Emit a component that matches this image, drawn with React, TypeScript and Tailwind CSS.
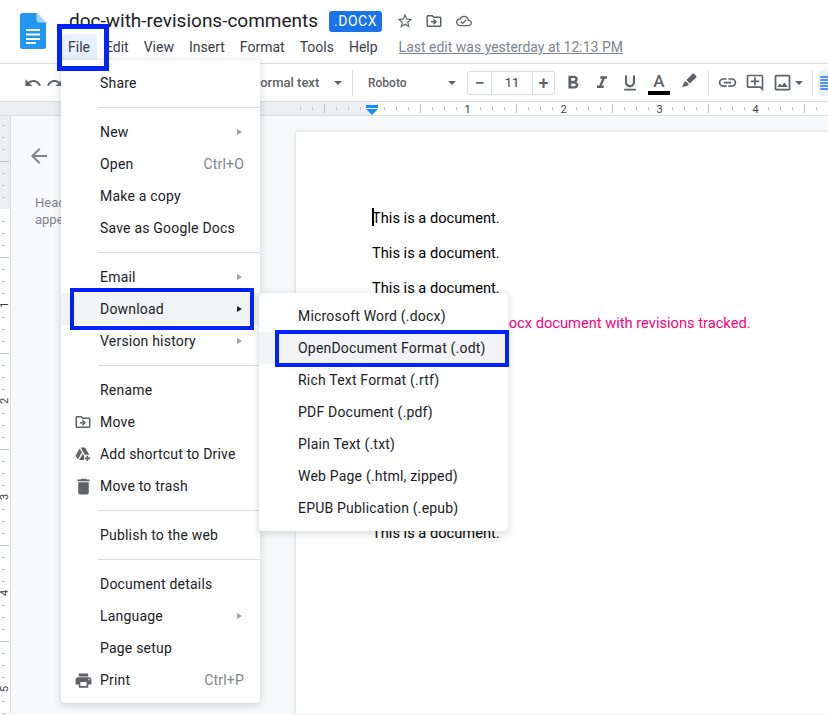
import React from 'react';
import {
  MdUndo,
  MdRedo,
  MdFormatBold,
  MdFormatItalic,
  MdFormatUnderlined,
  MdLink,
  MdOutlineAddComment,
  MdOutlineImage,
  MdStarBorder,
  MdOutlineDriveFileMove,
  MdOutlineCloudDone,
  MdDelete,
  MdPrint,
  MdArrowBack,
  MdFormatAlignLeft,
} from 'react-icons/md';

const font = "font-['Roboto','Liberation_Sans',sans-serif]";

function Caret() {
  return <div className="w-0 h-0 shrink-0 border-x-[4px] border-x-transparent border-t-[4px] border-t-[#5f6368]" />;
}

function Sep() {
  return <div className="w-px h-[26px] shrink-0 bg-[#dadce0]" />;
}

function MenuSep() {
  return <div className="h-px my-2 ml-[37px] bg-[#dadce0]" />;
}

function DriveIcon() {
  return (
    <svg width="16" height="14" viewBox="0 0 16 14" fill="currentColor">
      <path d="M5.6 0.5H10L14.3 7.8H9.9Z" />
      <path d="M4.6 1.4L6.9 5.3 2.9 12.6 0.6 8.7Z" />
      <path d="M7.8 6.8L9.1 9.2V13H4.1Z" />
      <path d="M11.6 8.8H13.2V10.6H15.2V12.2H13.2V14H11.6V12.2H9.8V10.6H11.6Z" />
    </svg>
  );
}

function MarkerIcon() {
  return (
    <svg width="16" height="16" viewBox="0 0 16 16" fill="currentColor">
      <path d="M11.6 0.8C12 0.4 12.6 0.4 13 0.8L15.2 3C15.6 3.4 15.6 4 15.2 4.4L8.8 10.4 5.4 7Z" />
      <path d="M4.6 7.9L7.9 11.2 6 13 1 14 3 9.8Z" />
    </svg>
  );
}

function MenuItem({
  label,
  icon,
  shortcut,
  arrow,
  active,
}: {
  label: string;
  icon?: React.ReactNode;
  shortcut?: string;
  arrow?: boolean;
  active?: boolean;
}) {
  return (
    <div className={`flex items-center h-8 text-sm text-[#202124] ${active ? 'bg-[#f1f3f4]' : ''}`}>
      <div className="w-[39px] shrink-0 pl-[10px] text-[#5f6368]">
        <div className="w-6 flex justify-center">{icon}</div>
      </div>
      <div className="flex-1 whitespace-nowrap tracking-[0.2px]">{label}</div>
      {shortcut && <div className="pr-4 text-[#80868b] tracking-[0.2px]">{shortcut}</div>}
      {arrow && (
        <div
          className={`mr-[18px] w-0 h-0 border-y-[3.5px] border-y-transparent border-l-[5px] ${
            active ? 'border-l-[#202124]' : 'border-l-[#9aa0a6]'
          }`}
        />
      )}
    </div>
  );
}

function HRuler() {
  const ticks = [];
  for (let i = -6; i <= 38; i++) {
    const x = 372 + i * 12;
    if (i % 8 === 0) continue;
    const half = i % 4 === 0;
    ticks.push(<line key={i} x1={x + 0.5} x2={x + 0.5} y1={half ? 2 : 5} y2={half ? 11 : 8} stroke="#bdc1c6" />);
  }
  return (
    <svg width="828" height="13" className="block">
      <rect x="0" y="0" width="372" height="13" fill="#eceef1" />
      <rect x="372" y="0" width="456" height="13" fill="#ffffff" />
      {ticks}
      {[1, 2, 3, 4].map((n) => (
        <text key={n} x={372 + n * 96 - 0.5} y="10.5" fontSize="11" fill="#3c4043" textAnchor="middle" fontFamily="Roboto">
          {n}
        </text>
      ))}
      <rect x="366" y="3" width="12" height="3" fill="#1a8cff" />
      <path d="M366 7h12l-6 6z" fill="#1a8cff" />
    </svg>
  );
}

function VRuler() {
  const ticks = [];
  for (let i = -7; i <= 42; i++) {
    const y = 93 + i * 12;
    if (i % 8 === 0) continue;
    const half = i % 4 === 0;
    ticks.push(<line key={i} y1={y + 0.5} y2={y + 0.5} x1={half ? 0 : 2} x2={half ? 9 : 5} stroke="#bdc1c6" />);
  }
  return (
    <svg width="10" height="598" className="block shrink-0">
      <rect x="0" y="0" width="10" height="93" fill="#eceef1" />
      <rect x="0" y="93" width="10" height="505" fill="#ffffff" />
      {ticks}
      {[1, 2, 3, 4, 5].map((n) => (
        <text
          key={n}
          fontSize="11"
          fill="#3c4043"
          textAnchor="middle"
          fontFamily="Roboto"
          transform={`translate(8 ${93 + n * 96}) rotate(-90)`}
        >
          {n}
        </text>
      ))}
    </svg>
  );
}

export default function App() {
  const lines = [
    'This is a document.',
    'This is a document.',
    'This is a document.',
    'This is a Microsoft .docx document with revisions tracked.',
    'This is a document.',
    'This is a document.',
    'This is a document.',
    'This is a document.',
    'This is a document.',
    'This is a document.',
  ];

  return (
    <div className={`relative w-[828px] h-[715px] overflow-hidden bg-white ${font}`}>
      {/* header */}
      <div className="flex h-[64px] border-b border-[#dadce0]">
        <div className="w-[69px] shrink-0 pl-5 pt-[13px]">
          <svg width="26" height="36" viewBox="0 0 26 36">
            <path d="M2.5 0H16.5L26 9.5V33.5A2.5 2.5 0 0 1 23.5 36H2.5A2.5 2.5 0 0 1 0 33.5V2.5A2.5 2.5 0 0 1 2.5 0Z" fill="#2196f3" />
            <path d="M16.5 0L26 9.5H19A2.5 2.5 0 0 1 16.5 7Z" fill="#a9d4fb" />
            <path d="M6 16H20V18H6ZM6 20.5H20V22.5H6ZM6 25H20V27H6ZM6 29H16V31H6Z" fill="#ffffff" />
          </svg>
        </div>
        <div className="flex-1">
          <div className="flex items-center h-[34px] pt-[8px]">
            <div className="text-[19px] text-[#202124] w-[260px] whitespace-nowrap">doc-with-revisions-comments</div>
            <div className="w-[53px] h-[21px] rounded-[3px] bg-[#1a73e8] text-white text-sm flex items-center justify-center tracking-[0.5px]">
              .DOCX
            </div>
            <MdStarBorder className="ml-[14px] text-[#5f6368] shrink-0" size={18} />
            <MdOutlineDriveFileMove className="ml-[11px] text-[#5f6368] shrink-0" size={18} />
            <MdOutlineCloudDone className="ml-[13px] text-[#5f6368] shrink-0" size={16} />
          </div>
          <div className="flex items-center h-[26px] gap-[15px] text-sm text-[#3c4043] whitespace-nowrap">
            <span className="h-[26px] leading-[26px] -ml-[7px] pl-[6px] pr-[7px] -mr-[7px] rounded-t-[4px] bg-[#e8f0fe]">File</span>
            <span>Edit</span>
            <span>View</span>
            <span>Insert</span>
            <span>Format</span>
            <span>Tools</span>
            <span>Help</span>
            <span className="ml-[6px] text-[#80868b] underline">Last edit was yesterday at 12:13 PM</span>
          </div>
        </div>
      </div>

      {/* toolbar */}
      <div className="flex items-center h-[38px] text-[#5f6368] border-b border-[#dadce0]">
        <MdUndo className="ml-6 shrink-0" size={18} />
        <MdRedo className="ml-1 shrink-0" size={18} />
        <div className="ml-[187px] w-[66px] shrink-0 text-[13px] font-medium whitespace-nowrap">Normal text</div>
        <div className="ml-[17px]">
          <Caret />
        </div>
        <div className="ml-[10px]">
          <Sep />
        </div>
        <div className="ml-[15px] w-[80px] shrink-0 text-xs font-medium">Roboto</div>
        <Caret />
        <div className="ml-[11px] w-[88px] h-6 shrink-0 flex items-center border border-[#dadce0] rounded-[3px] text-[13px]">
          <div className="w-6 text-center border-r border-[#dadce0] text-lg leading-[22px] font-medium">−</div>
          <div className="w-10 text-center text-[#3c4043]">11</div>
          <div className="flex-1 text-center border-l border-[#dadce0] text-lg leading-[22px] font-medium">+</div>
        </div>
        <div className="ml-1 w-7 flex justify-center">
          <MdFormatBold size={22} />
        </div>
        <div className="ml-px w-7 flex justify-center">
          <MdFormatItalic size={20} />
        </div>
        <div className="w-7 flex justify-center">
          <MdFormatUnderlined size={20} />
        </div>
        <div className="ml-px w-7 flex flex-col items-center">
          <span className="text-[17px] leading-[17px] font-medium mt-[3px]">A</span>
          <div className="w-[22px] h-1 bg-black mt-[1px]" />
        </div>
        <div className="ml-0.5 w-7 flex justify-center -mt-1">
          <MarkerIcon />
        </div>
        <div className="ml-[5px]">
          <Sep />
        </div>
        <div className="ml-1 w-7 flex justify-center">
          <MdLink size={21} />
        </div>
        <div className="w-7 flex justify-center">
          <MdOutlineAddComment size={20} />
        </div>
        <div className="w-[26px] flex justify-center">
          <MdOutlineImage size={21} />
        </div>
        <Caret />
        <div className="ml-[9px]">
          <Sep />
        </div>
        <div className="ml-[5px] w-[10px] h-[26px] bg-[#e8f0fe] rounded-l-[4px] overflow-hidden text-[#1a73e8] shrink-0">
          <MdFormatAlignLeft className="mt-[4px]" size={18} />
        </div>
      </div>

      {/* ruler */}
      <div className="border-b border-[#dadce0] h-[14px]">
        <HRuler />
      </div>

      {/* body */}
      <div className="flex bg-[#f8f9fa] h-[598px]">
        <VRuler />
        <div className="w-[286px] shrink-0 border-l border-[#dadce0]">
          <MdArrowBack className="ml-[16px] mt-[28px] text-[#80868b]" size={24} />
          <div className="ml-[24px] mt-[26px] w-[225px] text-[13px] leading-[17px] text-[#80868b]">
            Headings you add to the document will appear here.
          </div>
        </div>
        <div className="flex-1 mt-4 bg-white pl-[76px] pt-[78px] shadow-[0_0_3px_rgba(60,64,67,0.25)] relative">
          {lines.map((l, i) => (
            <div
              key={i}
              className={`h-[35px] leading-[17px] text-[14.67px] whitespace-nowrap ${i === 3 ? 'text-[#ff0080]' : 'text-black'}`}
            >
              {l}
            </div>
          ))}
          <div className="absolute left-[76px] top-[76px] w-[2px] h-[18px] bg-black" />
        </div>
      </div>

      {/* file menu */}
      <div className="absolute left-[61px] top-[60px] w-[199px] py-[7px] bg-white rounded-b-[4px] shadow-[0_2px_6px_2px_rgba(60,64,67,0.15)]">
        <MenuItem label="Share" />
        <MenuSep />
        <MenuItem label="New" arrow />
        <MenuItem label="Open" shortcut="Ctrl+O" />
        <MenuItem label="Make a copy" />
        <MenuItem label="Save as Google Docs" />
        <MenuSep />
        <MenuItem label="Email" arrow />
        <MenuItem label="Download" arrow active />
        <MenuItem label="Version history" arrow />
        <MenuSep />
        <MenuItem label="Rename" />
        <MenuItem label="Move" icon={<MdOutlineDriveFileMove size={18} />} />
        <MenuItem label="Add shortcut to Drive" icon={<DriveIcon />} />
        <MenuItem label="Move to trash" icon={<MdDelete size={21} />} />
        <MenuSep />
        <MenuItem label="Publish to the web" />
        <MenuSep />
        <MenuItem label="Document details" />
        <MenuItem label="Language" arrow />
        <MenuItem label="Page setup" />
        <MenuItem label="Print" shortcut="Ctrl+P" icon={<MdPrint size={19} />} />
      </div>

      {/* download submenu */}
      <div className="absolute left-[259px] top-[293px] w-[249px] py-[7px] bg-white rounded-[4px] shadow-[0_2px_6px_2px_rgba(60,64,67,0.15)]">
        <MenuItem label="Microsoft Word (.docx)" />
        <MenuItem label="OpenDocument Format (.odt)" active />
        <MenuItem label="Rich Text Format (.rtf)" />
        <MenuItem label="PDF Document (.pdf)" />
        <MenuItem label="Plain Text (.txt)" />
        <MenuItem label="Web Page (.html, zipped)" />
        <MenuItem label="EPUB Publication (.epub)" />
      </div>

      {/* blue callouts */}
      <div className="absolute left-[57px] top-[24px] w-[52px] h-[47px] border-[5px] border-[#0022ff]" />
      <div className="absolute left-[70px] top-[288px] w-[184px] h-[42px] border-[4px] border-[#0022ff]" />
      <div className="absolute left-[275px] top-[330px] w-[234px] h-[37px] border-[4px] border-[#0022ff]" />
    </div>
  );
}
